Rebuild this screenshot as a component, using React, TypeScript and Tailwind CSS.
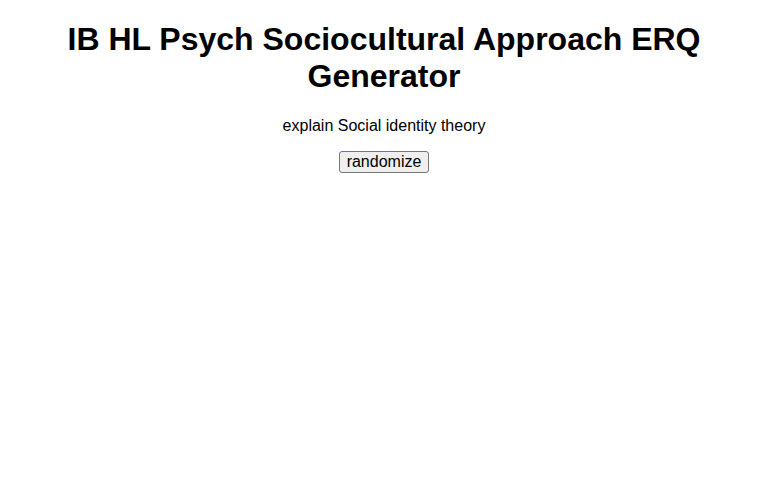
import { useState } from "react";

const prompts = [
  "explain Social identity theory",
  "evaluate Social cognitive theory",
  "discuss the formation of stereotypes",
  "evaluate research on enculturation",
];

export default function App() {
  const [prompt, setPrompt] = useState(prompts[0]);

  const randomize = () => {
    setPrompt(prompts[Math.floor(Math.random() * prompts.length)]);
  };

  return (
    <div className="min-h-screen bg-white text-black text-center font-['Liberation_Sans',Arial,sans-serif]">
      <h1 className="text-[32px] leading-[37px] font-bold pt-[21px] mb-[22px]">
        IB HL Psych Sociocultural Approach ERQ Generator
      </h1>
      <p className="text-base leading-[18px] mb-[15px]">{prompt}</p>
      <button
        onClick={randomize}
        className="text-base leading-[18px] px-[7px] py-px border border-[#767676] rounded-[3px] bg-[#efefef] text-black"
      >
        randomize
      </button>
    </div>
  );
}
